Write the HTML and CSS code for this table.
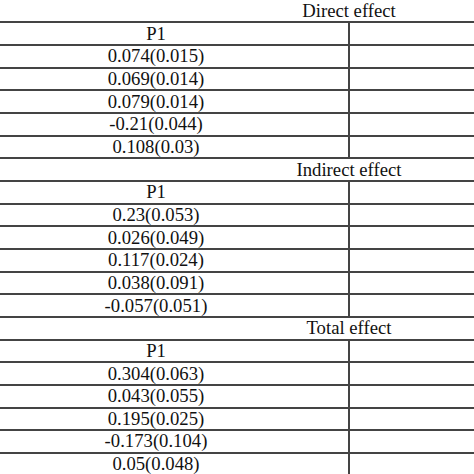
FILE: index.html
```html
<!DOCTYPE html>
<html>
<head>
<meta charset="utf-8">
<link rel="stylesheet" href="styles.css">
</head>
<body>
<div class="frame">
<table class="effects">
  <tr class="head"><td colspan="2">Direct effect</td></tr>
  <tr><td>P1</td><td></td></tr>
  <tr><td>0.074(0.015)</td><td></td></tr>
  <tr><td>0.069(0.014)</td><td></td></tr>
  <tr><td>0.079(0.014)</td><td></td></tr>
  <tr><td>-0.21(0.044)</td><td></td></tr>
  <tr><td>0.108(0.03)</td><td></td></tr>
  <tr class="head"><td colspan="2">Indirect effect</td></tr>
  <tr><td>P1</td><td></td></tr>
  <tr><td>0.23(0.053)</td><td></td></tr>
  <tr><td>0.026(0.049)</td><td></td></tr>
  <tr><td>0.117(0.024)</td><td></td></tr>
  <tr><td>0.038(0.091)</td><td></td></tr>
  <tr><td>-0.057(0.051)</td><td></td></tr>
  <tr class="head"><td colspan="2">Total effect</td></tr>
  <tr><td>P1</td><td></td></tr>
  <tr><td>0.304(0.063)</td><td></td></tr>
  <tr><td>0.043(0.055)</td><td></td></tr>
  <tr><td>0.195(0.025)</td><td></td></tr>
  <tr><td>-0.173(0.104)</td><td></td></tr>
  <tr><td>0.05(0.048)</td><td></td></tr>
</table>
</div>
</body>
</html>
```
FILE: styles.css
```css
html, body {
  margin: 0;
  padding: 0;
  background: #fff;
}
.frame {
  width: 474px;
  height: 474px;
  overflow: hidden;
}
.effects {
  border-collapse: collapse;
  table-layout: fixed;
  width: 774px;
  margin-left: -38px;
  margin-top: 0.7px;
  font-family: "Liberation Serif", "Times New Roman", serif;
  font-size: 18.7px;
  color: #111;
}
.effects td {
  width: 50%;
  height: 20.67px;
  padding: 0;
  line-height: 20px;
  text-align: center;
  vertical-align: middle;
  border: 2px solid #444;
  white-space: nowrap;
}
.effects tr:first-child td {
  border-top: none;
}
```
